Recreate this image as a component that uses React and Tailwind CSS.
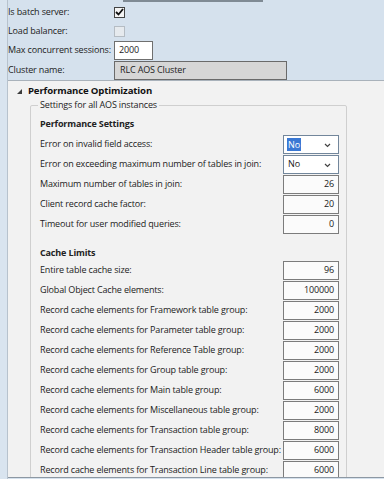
import React from "react";

function Chevron() {
  return (
    <svg width="7" height="5" viewBox="0 0 7 5" className="absolute right-[7px] top-[7px]">
      <path d="M1 1 L3.5 3.5 L6 1" fill="none" stroke="#444" strokeWidth="1.2" />
    </svg>
  );
}

function ValueBox({ value }) {
  return (
    <div className="w-[56px] h-[19px] shrink-0 border border-[#7c7c7c] bg-[#fbfbfb] flex items-center justify-end pr-[4px] text-[#1a1a1a]">
      {value}
    </div>
  );
}

function SelectBox({ highlighted }) {
  return (
    <div className="relative w-[56px] h-[19px] shrink-0 border border-[#72869b] bg-white flex items-center pl-[3px] text-[#1a1a1a]">
      {highlighted ? (
        <span className="bg-[#3a78d4] text-white px-[1px] leading-[13px]">No</span>
      ) : (
        <span className="px-[1px]">No</span>
      )}
      <Chevron />
    </div>
  );
}

function Row({ label, children }) {
  return (
    <div className="h-[20px] flex items-center justify-between">
      <span className="whitespace-nowrap">{label}</span>
      {children}
    </div>
  );
}

const perf = [
  ["Error on invalid field access:", <SelectBox highlighted />],
  ["Error on exceeding maximum number of tables in join:", <SelectBox />],
  ["Maximum number of tables in join:", <ValueBox value="26" />],
  ["Client record cache factor:", <ValueBox value="20" />],
  ["Timeout for user modified queries:", <ValueBox value="0" />],
];

const cache = [
  ["Entire table cache size:", "96"],
  ["Global Object Cache elements:", "100000"],
  ["Record cache elements for Framework table group:", "2000"],
  ["Record cache elements for Parameter table group:", "2000"],
  ["Record cache elements for Reference Table group:", "2000"],
  ["Record cache elements for Group table group:", "2000"],
  ["Record cache elements for Main table group:", "6000"],
  ["Record cache elements for Miscellaneous table group:", "2000"],
  ["Record cache elements for Transaction table group:", "8000"],
  ["Record cache elements for Transaction Header table group:", "6000"],
  ["Record cache elements for Transaction Line table group:", "6000"],
];

export default function App() {
  return (
    <div
      className="w-[384px] h-[479px] overflow-hidden flex bg-[#f3f3f3] text-[#222] text-[9px] tracking-[-0.15px]"
      style={{ fontFamily: '"Open Sans", "Noto Sans", sans-serif' }}
    >
      <div className="w-[8px] shrink-0 bg-[#d9e4ef] border-r border-[#b7c2cd]" />
      <div className="flex-1 flex flex-col min-w-0">
        <div className="h-[81px] shrink-0 bg-[#d5e1ed] border-b border-[#a9b2bb] flex flex-col">
          <div className="h-[2px] flex">
            <div className="ml-[115px] w-[140px] h-[2px] border-b-2 border-[#7f8a94]" />
          </div>
          <div className="h-[20px] flex items-center">
            <span className="w-[106px] whitespace-nowrap">Is batch server:</span>
            <div className="w-[11px] h-[11px] border border-[#444] bg-[#f4f4f4] flex items-center justify-center">
              <svg width="9" height="8" viewBox="0 0 9 8">
                <path d="M1 4 L3.5 6.5 L8 1" fill="none" stroke="#111" strokeWidth="1.8" />
              </svg>
            </div>
          </div>
          <div className="h-[18px] flex items-center">
            <span className="w-[106px] whitespace-nowrap">Load balancer:</span>
            <div className="w-[11px] h-[11px] border border-[#b5bcc3] bg-[#e6eaee]" />
          </div>
          <div className="h-[20px] flex items-center">
            <span className="w-[106px] whitespace-nowrap">Max concurrent sessions:</span>
            <div className="w-[39px] h-[19px] border border-[#6f6f6f] bg-white flex items-center pl-[4px]">2000</div>
          </div>
          <div className="h-[20px] flex items-center">
            <span className="w-[106px] whitespace-nowrap">Cluster name:</span>
            <div className="w-[173px] h-[19px] border border-[#6a6a6a] bg-[#d6d6d6] flex items-center pl-[5px]">RLC AOS Cluster</div>
          </div>
        </div>
        <div className="h-[396px] shrink-0 overflow-hidden flex flex-col bg-[#f2f2f2]">
          <div className="h-[19px] shrink-0 flex items-center pl-[9px] mt-[1px]">
            <svg width="5" height="5" viewBox="0 0 6 6" className="mr-[6px]">
              <path d="M6 0 L6 6 L0 6 Z" fill="#3c3c3c" />
            </svg>
            <span className="font-bold text-[9.6px] text-[#111]">Performance Optimization</span>
          </div>
          <fieldset className="ml-[22px] w-[317px] shrink-0 border border-[#cfcfcf] rounded-[2px] pl-[9px] pr-[7px] pt-[0px] mt-[-2px]">
            <legend className="ml-[-2px] px-[2px] leading-[12px] whitespace-nowrap">Settings for all AOS instances</legend>
            <div className="h-[20px] flex items-center mt-[3px] font-bold">Performance Settings</div>
            {perf.map(([l, c], i) => (
              <Row key={i} label={l}>{c}</Row>
            ))}
            <div className="h-[26px] flex items-end pb-[1px] font-bold">Cache Limits</div>
            {cache.map(([l, v], i) => (
              <Row key={i} label={l}>
                <ValueBox value={v} />
              </Row>
            ))}
          </fieldset>
        </div>
        <div className="h-[2px] shrink-0 border-t border-[#8d98a3] bg-[#d5e1ed]" />
      </div>
    </div>
  );
}
